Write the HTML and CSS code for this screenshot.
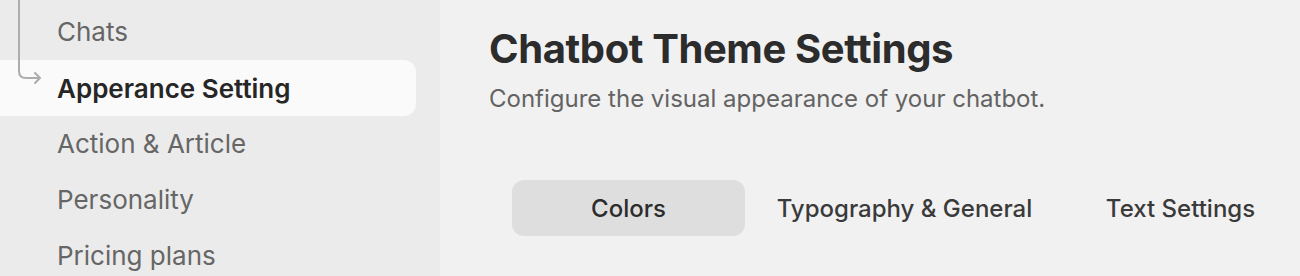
FILE: index.html
```html
<!DOCTYPE html>
<html lang="en">
<head>
  <meta charset="UTF-8" />
  <meta name="viewport" content="width=device-width, initial-scale=1.0" />
  <title>Chatbot Theme Settings</title>
  <link rel="stylesheet" href="styles.css">
</head>
<body>
  <div class="layout">
    <aside class="sidebar">
      <ul class="nav-list">
        <li class="nav-item">Chats</li>
        <li class="nav-item active">
          <svg class="tree-line" width="44" height="100" viewBox="0 0 44 100">
            <path d="M19 0 V82 Q19 89 26 89 H40 M35 84 L40 89 L35 94" fill="none" stroke="#adadad" stroke-width="2" stroke-linecap="round" stroke-linejoin="round" />
          </svg>
          Apperance Setting
        </li>
        <li class="nav-item">Action &amp; Article</li>
        <li class="nav-item">Personality</li>
        <li class="nav-item">Pricing plans</li>
      </ul>
    </aside>

    <main class="content">
      <h1>Chatbot Theme Settings</h1>
      <p class="subtitle">Configure the visual appearance of your chatbot.</p>

      <div class="tabs">
        <button class="tab active">Colors</button>
        <button class="tab">Typography &amp; General</button>
        <button class="tab">Text Settings</button>
      </div>
    </main>
  </div>
</body>
</html>
```

FILE: styles.css
```css
* {
  margin: 0;
  padding: 0;
  box-sizing: border-box;
  font-family: Inter, 'Noto Sans', sans-serif;
}

body {
  height: 276px;
  overflow: hidden;
  background: #f1f1f1;
}

.layout {
  display: flex;
  height: 100%;
}

.sidebar {
  width: 440px;
  flex-shrink: 0;
  background: #ebebeb;
  padding-top: 3px;
}

.nav-list {
  list-style: none;
  width: 416px;
}

.nav-item {
  position: relative;
  height: 56px;
  display: flex;
  align-items: center;
  padding-left: 57px;
  font-size: 26px;
  color: #666;
}

.nav-item.active {
  margin-top: 1px;
  margin-bottom: -1px;
  background: #fafafa;
  border-radius: 0 12px 12px 0;
  color: #262626;
  font-weight: 600;
}

.tree-line {
  position: absolute;
  left: 0;
  bottom: 28px;
  margin-bottom: -1px;
}

.content {
  flex: 1;
  padding: 25px 0 0 49px;
}

h1 {
  font-size: 40px;
  font-weight: 700;
  letter-spacing: -0.4px;
  color: #2c2c2c;
  line-height: 48px;
}

.subtitle {
  margin-top: 12px;
  font-size: 24px;
  color: #636363;
  line-height: 28px;
}

.tabs {
  display: flex;
  gap: 43px;
  margin-top: 67px;
  padding-left: 23px;
}

.tab {
  width: 233px;
  height: 56px;
  display: flex;
  align-items: center;
  justify-content: center;
  padding: 0;
  border: none;
  border-radius: 12px;
  background: transparent;
  font-size: 24px;
  font-weight: 500;
  white-space: nowrap;
  color: #3a3a3a;
  cursor: pointer;
}

.tab.active {
  background: #dedede;
  color: #2c2c2c;
}
```
